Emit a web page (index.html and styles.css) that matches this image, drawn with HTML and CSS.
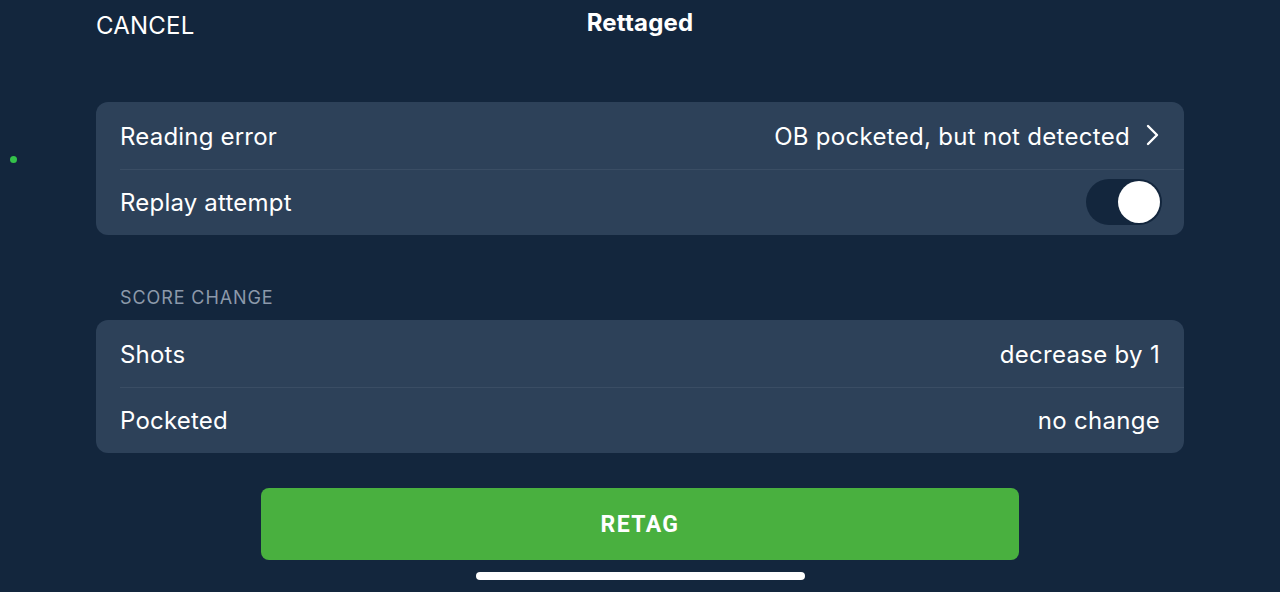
FILE: index.html
```html
<!DOCTYPE html>
<html>
<head>
<meta charset="utf-8">
<link rel="stylesheet" href="styles.css">
</head>
<body>
<div class="dot"></div>
<div class="page">
  <header class="nav">
    <span class="cancel">CANCEL</span>
    <span class="title">Rettaged</span>
    <span class="spacer"></span>
  </header>

  <section class="card first">
    <div class="row">
      <span class="label">Reading error</span>
      <span class="value">OB pocketed, but not detected
        <svg class="chev" width="14" height="22" viewBox="0 0 14 22"><path d="M2 2 L11 11 L2 20" fill="none" stroke="#fff" stroke-width="2.4" stroke-linecap="round" stroke-linejoin="round"/></svg>
      </span>
    </div>
    <div class="row">
      <span class="label">Replay attempt</span>
      <span class="toggle"><span class="knob"></span></span>
    </div>
  </section>

  <div class="section-title">SCORE CHANGE</div>
  <section class="card">
    <div class="row">
      <span class="label">Shots</span>
      <span class="value">decrease by 1</span>
    </div>
    <div class="row">
      <span class="label">Pocketed</span>
      <span class="value">no change</span>
    </div>
  </section>

  <div class="actions">
    <button class="retag">RETAG</button>
  </div>
  <div class="home-wrap"><div class="home"></div></div>
</div>
</body>
</html>
```

FILE: styles.css
```css
* { box-sizing: border-box; }
html, body {
  margin: 0;
  padding: 0;
  width: 1280px;
  height: 592px;
  overflow: hidden;
  background: #13263d;
  font-family: Inter, "Liberation Sans", sans-serif;
  color: #fff;
}
.dot {
  position: absolute;
  left: 10px;
  top: 156px;
  width: 7px;
  height: 7px;
  border-radius: 50%;
  background: #34c24a;
}
.page {
  width: 1088px;
  margin: 0 auto;
  display: flex;
  flex-direction: column;
}
.nav {
  height: 50px;
  display: flex;
  align-items: flex-start;
  justify-content: space-between;
  padding-top: 8px;
}
.cancel {
  font-size: 24px;
  font-weight: 400;
  width: 200px;
  padding-top: 3px;
  letter-spacing: 0.2px;
}
.title {
  font-size: 24px;
  font-weight: 700;
  padding-top: 0;
  letter-spacing: 0.2px;
}
.spacer { width: 200px; }
.card {
  background: #2d4159;
  border-radius: 12px;
  display: flex;
  flex-direction: column;
}
.card.first { margin-top: 52px; }
.row {
  height: 66.5px;
  display: flex;
  align-items: center;
  justify-content: space-between;
  padding: 0 24px;
  font-size: 24px;
  position: relative;
}
.row + .row::before {
  content: "";
  position: absolute;
  left: 24px;
  right: 0;
  top: 0;
  height: 1px;
  background: #3a4d64;
}
.label { letter-spacing: 0.2px; padding-top: 2px; }
.value {
  display: flex;
  align-items: center;
  gap: 16px;
  letter-spacing: 0.3px;
  padding-top: 2px;
}
.chev { margin-right: 0; margin-top: -2px; }
.toggle {
  width: 76px;
  height: 46px;
  border-radius: 23px;
  background: #13263d;
  display: flex;
  align-items: center;
  justify-content: flex-end;
  padding: 0 2px;
  margin-right: -2px;
}
.knob {
  width: 42px;
  height: 42px;
  border-radius: 50%;
  background: #fff;
}
.section-title {
  margin-top: 52px;
  padding-left: 24px;
  height: 33px;
  font-size: 18px;
  color: #8c99aa;
  letter-spacing: 0.9px;
}
.actions {
  display: flex;
  justify-content: center;
  margin-top: 35px;
}
.retag {
  width: 758px;
  height: 72px;
  border: none;
  border-radius: 8px;
  background: #49b03f;
  color: #fff;
  font-family: Roboto, "Liberation Sans", sans-serif;
  font-weight: 700;
  font-size: 23px;
  letter-spacing: 1.4px;
}
.home-wrap {
  display: flex;
  justify-content: center;
  margin-top: 12px;
}
.home {
  width: 329px;
  height: 8px;
  border-radius: 4px;
  background: #fff;
}
```
